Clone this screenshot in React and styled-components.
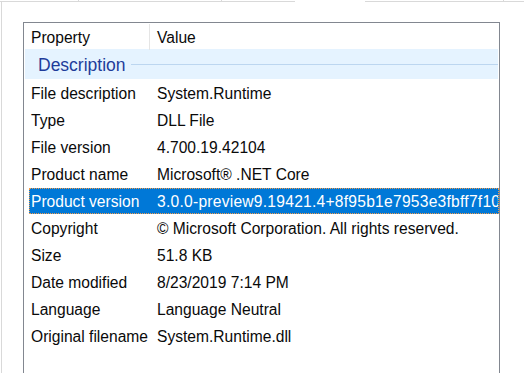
import React from 'react';
import styled, { createGlobalStyle } from 'styled-components';

const GlobalStyle = createGlobalStyle`
  html, body {
    margin: 0;
    padding: 0;
    background: #ffffff;
  }
  body {
    font-family: "Liberation Sans", Arial, sans-serif;
    color: #000000;
    overflow: hidden;
  }
`;

const Window = styled.div`
  width: 524px;
  height: 373px;
  overflow: hidden;
  background: #ffffff;
`;

const TabStrip = styled.div`
  display: flex;
  height: 2px;
`;

const Tab = styled.div`
  width: ${(p) => p.$w}px;
  flex: ${(p) => (p.$grow ? 1 : 'none')};
  box-sizing: border-box;
  border-bottom: ${(p) => (p.$active ? 'none' : '1px solid #d9d9d9')};
  border-right: ${(p) => (p.$sep ? '1px solid #d9d9d9' : 'none')};
`;

const TabPage = styled.div`
  margin-left: 1px;
  border-left: 1px solid #d9d9d9;
  height: 371px;
  box-sizing: border-box;
  padding: 20px 0 0 21px;
`;

const ListView = styled.div`
  width: 477px;
  height: 400px;
  box-sizing: border-box;
  border: 1px solid #828790;
  font-size: 15.6px;
  color: #0a0a0a;
`;

const HeaderRow = styled.div`
  display: grid;
  grid-template-columns: 126px 1fr;
  height: 26px;
  align-items: center;
`;

const HeaderCell = styled.div`
  height: 100%;
  display: flex;
  align-items: center;
  padding: 3px 0 0 7px;
  box-sizing: border-box;
  border-right: ${(p) => (p.$divider ? '1px solid #e5e5e5' : 'none')};
  margin: ${(p) => (p.$divider ? '1px 0 0 0' : '0')};
`;

const GroupRow = styled.div`
  display: flex;
  align-items: center;
  gap: 5px;
  height: 30px;
  margin: 0 1px;
  padding: 3px 0 0 13px;
  box-sizing: border-box;
  background: #e5f3ff;
  color: #1e3c9a;
  font-size: 17.5px;
`;

const GroupLine = styled.div`
  flex: 1;
  height: 1px;
  margin-top: -3px;
  background: #bcd6f0;
`;

const Row = styled.div`
  display: grid;
  grid-template-columns: 126px 1fr;
  height: 26px;
  margin: ${(p) => (p.$first ? '1px' : '0')} 0 1px 5px;
  padding-top: 2px;
  align-items: center;
  box-sizing: border-box;
  background: ${(p) => (p.$selected ? '#0078d7' : 'transparent')};
  color: ${(p) => (p.$selected ? '#ffffff' : 'inherit')};
  border: 1px ${(p) => (p.$selected ? 'dotted #f29b4a' : 'solid transparent')};
`;

const Cell = styled.div`
  padding-left: 1px;
  white-space: nowrap;
  overflow: hidden;
  letter-spacing: ${(p) => (p.$wide ? '0.25px' : '0')};
`;

const rows = [
  ['File description', 'System.Runtime'],
  ['Type', 'DLL File'],
  ['File version', '4.700.19.42104'],
  ['Product name', 'Microsoft® .NET Core'],
  ['Product version', '3.0.0-preview9.19421.4+8f95b1e7953e3fbff7f10', true],
  ['Copyright', '© Microsoft Corporation. All rights reserved.'],
  ['Size', '51.8 KB'],
  ['Date modified', '8/23/2019 7:14 PM'],
  ['Language', 'Language Neutral'],
  ['Original filename', 'System.Runtime.dll'],
];

export default function App() {
  return (
    <Window>
      <GlobalStyle />
      <TabStrip>
        <Tab $w={79} $sep />
        <Tab $w={143} $sep />
        <Tab $w={73} />
        <Tab $w={70} $active />
        <Tab $w={139} $sep />
        <Tab $grow />
      </TabStrip>
      <TabPage>
        <ListView>
          <HeaderRow>
            <HeaderCell $divider>Property</HeaderCell>
            <HeaderCell>Value</HeaderCell>
          </HeaderRow>
          <GroupRow>
            Description
            <GroupLine />
          </GroupRow>
          {rows.map(([name, value, selected], i) => (
            <Row key={name} $selected={selected} $first={i === 0}>
              <Cell>{name}</Cell>
              <Cell $wide={selected}>{value}</Cell>
            </Row>
          ))}
        </ListView>
      </TabPage>
    </Window>
  );
}
